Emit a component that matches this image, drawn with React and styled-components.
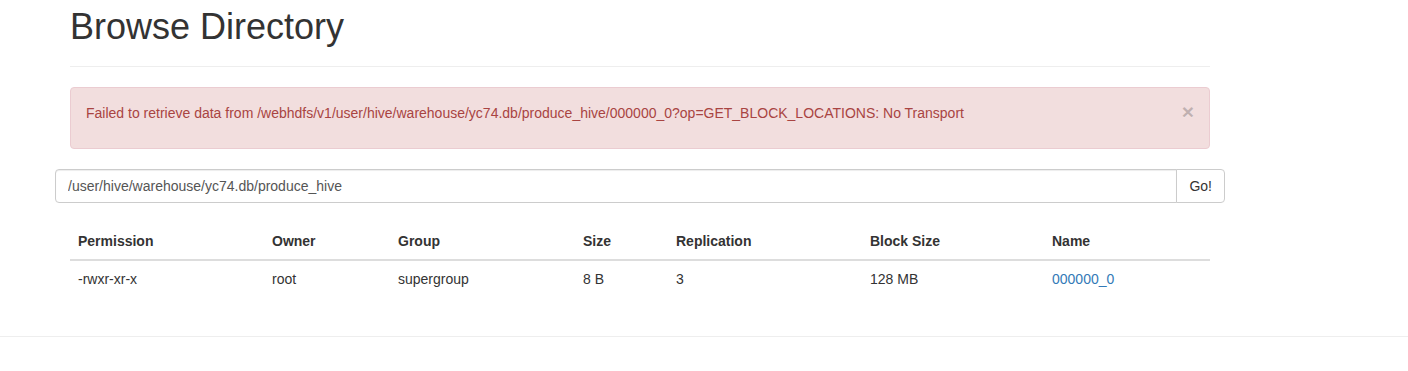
import React, { useState } from 'react';
import styled, { createGlobalStyle } from 'styled-components';

const GlobalStyle = createGlobalStyle`
  * { box-sizing: border-box; }
  body {
    margin: 0;
    font-family: "Liberation Sans", Arial, Helvetica, sans-serif;
    font-size: 14px;
    line-height: 1.42857143;
    color: #333;
    background: #fff;
  }
`;

const Container = styled.div`
  width: 1170px;
  margin-left: 55px;
  padding: 0 15px;
`;

const PageHeader = styled.div`
  padding-bottom: 9px;
  margin: 0 0 20px;
  border-bottom: 1px solid #eee;
`;

const Title = styled.h1`
  margin: 7px 0 10px;
  font-size: 36px;
  font-weight: 500;
  line-height: 1.1;
  color: #333;
`;

const Alert = styled.div`
  position: relative;
  padding: 15px 35px 25px 15px;
  margin-bottom: 20px;
  border: 1px solid #ebccd1;
  border-radius: 4px;
  background: #f2dede;
  color: #a94442;
`;

const Close = styled.button`
  position: absolute;
  top: 13px;
  right: 15px;
  padding: 0;
  border: 0;
  background: transparent;
  font-family: "Liberation Sans", Arial, sans-serif;
  font-size: 21px;
  font-weight: bold;
  line-height: 1;
  color: #000;
  opacity: 0.2;
  text-shadow: 0 1px 0 #fff;
  cursor: pointer;
`;

const Row = styled.div`
  margin: 0 -15px 20px;
`;

const InputGroup = styled.form`
  display: flex;
  height: 34px;
`;

const PathInput = styled.input`
  flex: 1;
  height: 34px;
  padding: 6px 12px;
  font-family: inherit;
  font-size: 14px;
  color: #555;
  border: 1px solid #ccc;
  border-radius: 4px 0 0 4px;
  box-shadow: inset 0 1px 1px rgba(0, 0, 0, 0.075);
  outline: none;
`;

const GoButton = styled.button`
  height: 34px;
  margin-left: -1px;
  padding: 6px 12px;
  font-family: inherit;
  font-size: 14px;
  color: #333;
  background: #fff;
  border: 1px solid #ccc;
  border-radius: 0 4px 4px 0;
  cursor: pointer;
`;

const Table = styled.table`
  width: 100%;
  margin-bottom: 20px;
  border-collapse: collapse;
  border-spacing: 0;
`;

const Th = styled.th`
  width: ${({ $w }) => $w}px;
  padding: 8px;
  text-align: left;
  font-weight: bold;
  line-height: 20px;
  border-bottom: 2px solid #ddd;
`;

const Td = styled.td`
  padding: 8px;
  line-height: 20px;
  border-top: 1px solid #ddd;
`;

const FileLink = styled.a`
  color: #337ab7;
  text-decoration: none;
`;

const Rule = styled.hr`
  margin: 39px 0 0;
  border: 0;
  border-top: 1px solid #eee;
`;

const columns = [
  ['Permission', 194],
  ['Owner', 126],
  ['Group', 185],
  ['Size', 93],
  ['Replication', 194],
  ['Block Size', 182],
  ['Name', 166],
];

const files = [
  {
    permission: '-rwxr-xr-x',
    owner: 'root',
    group: 'supergroup',
    size: '8 B',
    replication: '3',
    blockSize: '128 MB',
    name: '000000_0',
  },
];

export default function App() {
  const [path, setPath] = useState('/user/hive/warehouse/yc74.db/produce_hive');
  const [showAlert, setShowAlert] = useState(true);

  return (
    <>
      <GlobalStyle />
      <Container>
        <PageHeader>
          <Title>Browse Directory</Title>
        </PageHeader>

        {showAlert && (
          <Alert>
            <Close onClick={() => setShowAlert(false)}>×</Close>
            Failed to retrieve data from /webhdfs/v1/user/hive/warehouse/yc74.db/produce_hive/000000_0?op=GET_BLOCK_LOCATIONS: No Transport
          </Alert>
        )}

        <Row>
          <InputGroup onSubmit={(e) => e.preventDefault()}>
            <PathInput value={path} onChange={(e) => setPath(e.target.value)} />
            <GoButton type="submit">Go!</GoButton>
          </InputGroup>
        </Row>

        <Table>
          <thead>
            <tr>
              {columns.map(([label, w]) => (
                <Th key={label} $w={w}>{label}</Th>
              ))}
            </tr>
          </thead>
          <tbody>
            {files.map((f) => (
              <tr key={f.name}>
                <Td>{f.permission}</Td>
                <Td>{f.owner}</Td>
                <Td>{f.group}</Td>
                <Td>{f.size}</Td>
                <Td>{f.replication}</Td>
                <Td>{f.blockSize}</Td>
                <Td><FileLink href="#">{f.name}</FileLink></Td>
              </tr>
            ))}
          </tbody>
        </Table>
      </Container>
      <Rule />
    </>
  );
}
